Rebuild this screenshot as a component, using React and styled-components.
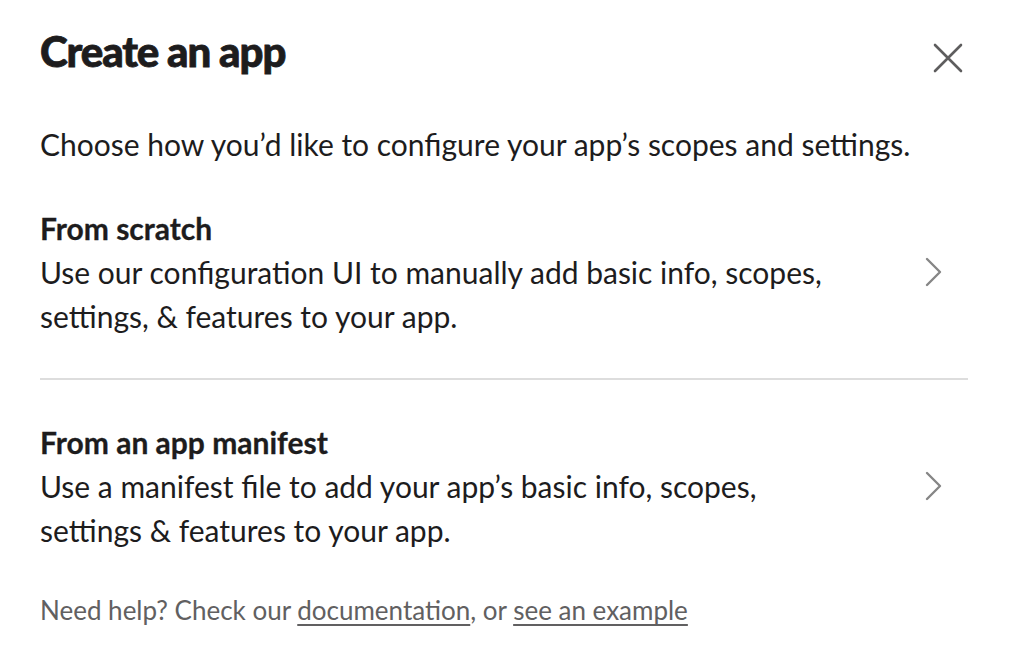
import React from "react";
import styled, { createGlobalStyle } from "styled-components";

const GlobalStyle = createGlobalStyle`
  body {
    margin: 0;
    background: #fff;
    font-family: Lato, "Noto Sans", sans-serif;
    color: #1d1c1d;
  }
`;

const Modal = styled.div`
  width: 1010px;
  height: 672px;
  box-sizing: border-box;
  padding: 21px 42px 0 40px;
  background: #fff;
`;

const Header = styled.header`
  display: flex;
  align-items: flex-start;
  justify-content: space-between;
  height: 60px;
`;

// Lato Black is not always there, so a thin stroke thickens the bold face
const Title = styled.h1`
  margin: 0;
  font-size: 42px;
  font-weight: 900;
  letter-spacing: -1.1px;
  line-height: 60px;
  -webkit-text-stroke: 0.8px #1d1c1d;
`;

const CloseButton = styled.button`
  border: 0;
  background: none;
  padding: 0;
  width: 40px;
  height: 40px;
  margin-top: 17px;
  display: flex;
  align-items: center;
  justify-content: center;
  color: #5e5d5e;
  cursor: pointer;
`;

const Intro = styled.p`
  margin: 41px 0 0;
  font-size: 30px;
  line-height: 44px;
`;

const Option = styled.div`
  display: flex;
  align-items: center;
  padding: ${(p) => p.pad};
  border-bottom: ${(p) => (p.divider ? "2px solid #dddddd" : "none")};
  cursor: pointer;
`;

const OptionText = styled.div`
  flex: 1;
`;

const OptionTitle = styled.h2`
  margin: 0;
  font-size: 30px;
  font-weight: 700;
  line-height: 44px;
  -webkit-text-stroke: 0.3px #1d1c1d;
`;

const OptionDesc = styled.p`
  margin: 0;
  font-size: 30px;
  line-height: 44px;
  max-width: 810px;
`;

const Chevron = styled.span`
  color: #868686;
  display: flex;
  margin-right: 26px;
`;

const Footer = styled.p`
  margin: 40px 0 0;
  font-size: 26px;
  line-height: 36px;
  color: #616061;

  a {
    color: #616061;
    text-decoration: underline;
    text-underline-offset: 4px;
  }
`;

const ChevronIcon = () => (
  <svg width="18" height="30" viewBox="0 0 18 30" fill="none">
    <path d="M3 2 L16 15 L3 28" stroke="currentColor" strokeWidth="2.4" strokeLinecap="round" strokeLinejoin="round" />
  </svg>
);

const CloseIcon = () => (
  <svg width="30" height="30" viewBox="0 0 30 30" fill="none">
    <path d="M2 2 L28 28 M28 2 L2 28" stroke="currentColor" strokeWidth="2.6" strokeLinecap="round" />
  </svg>
);

const App = () => {
  return (
    <>
      <GlobalStyle />
      <Modal>
        <Header>
          <Title>Create an app</Title>
          <CloseButton aria-label="Close">
            <CloseIcon />
          </CloseButton>
        </Header>
        <Intro>Choose how you’d like to configure your app’s scopes and settings.</Intro>
        <Option pad="40px 0 40px" divider>
          <OptionText>
            <OptionTitle>From scratch</OptionTitle>
            <OptionDesc>
              Use our configuration UI to manually add basic info, scopes, settings, &amp; features to your app.
            </OptionDesc>
          </OptionText>
          <Chevron>
            <ChevronIcon />
          </Chevron>
        </Option>
        <Option pad="40px 0 0">
          <OptionText>
            <OptionTitle>From an app manifest</OptionTitle>
            <OptionDesc>
              Use a manifest file to add your app’s basic info, scopes, settings &amp; features to your app.
            </OptionDesc>
          </OptionText>
          <Chevron>
            <ChevronIcon />
          </Chevron>
        </Option>
        <Footer>
          Need help? Check our <a href="#docs">documentation</a>, or <a href="#example">see an example</a>
        </Footer>
      </Modal>
    </>
  );
};

export default App;
